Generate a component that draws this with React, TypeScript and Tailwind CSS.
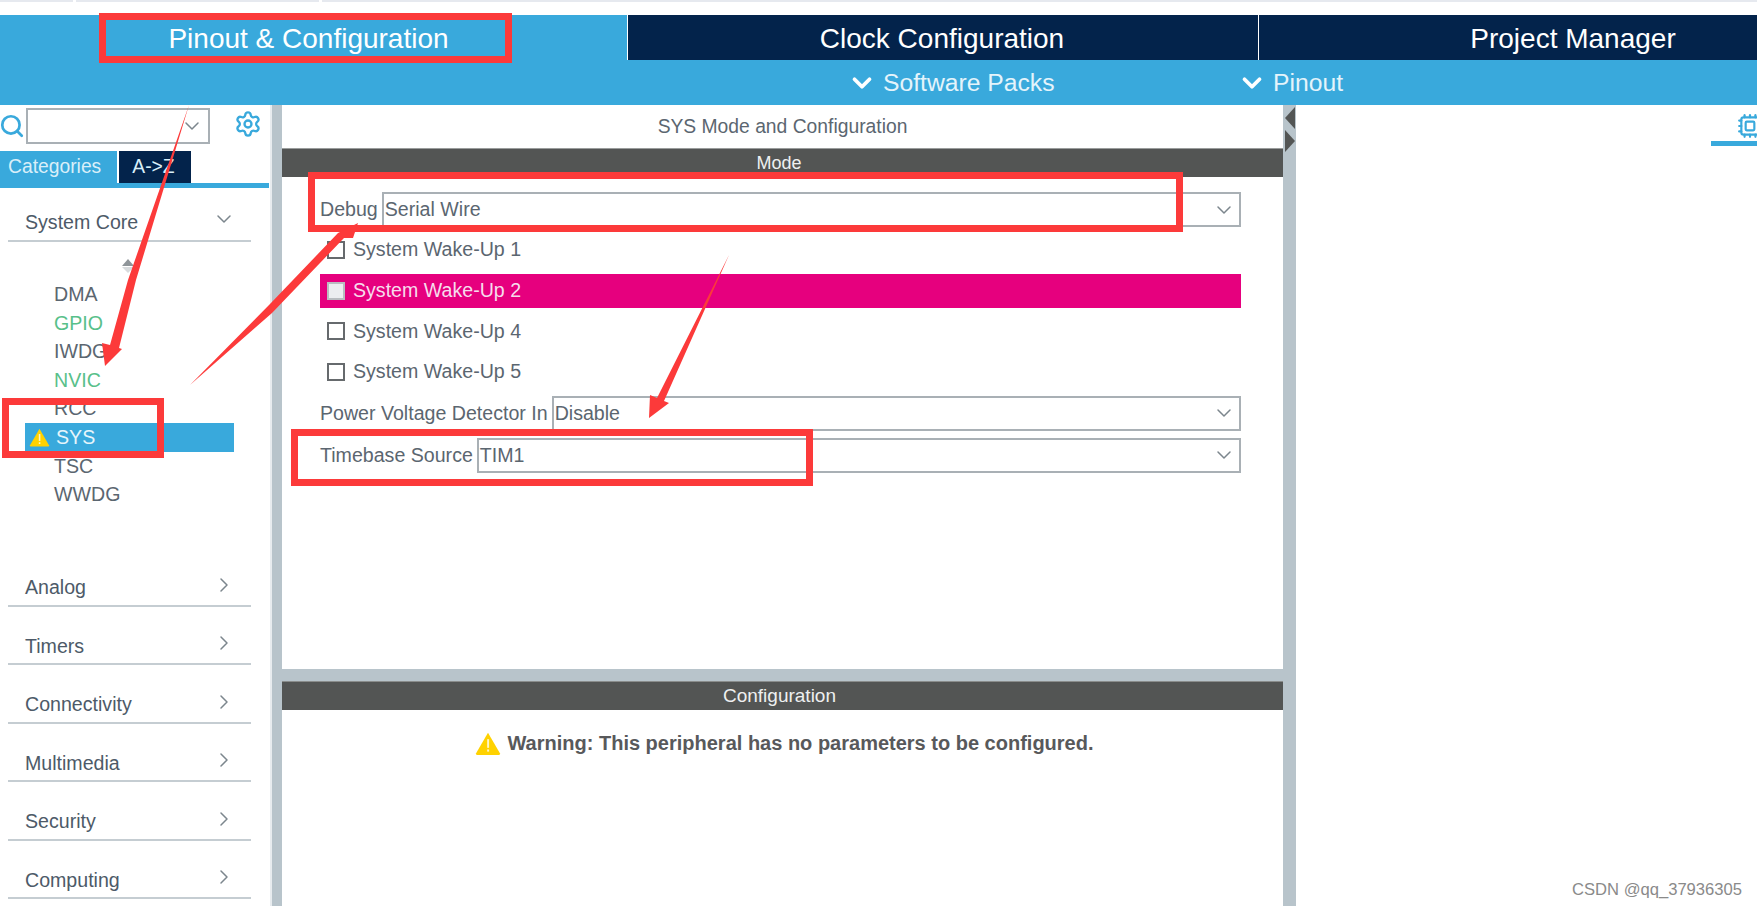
import { ChevronDown, ChevronRight, Cpu, Search, Settings } from "lucide-react";

function Warn({ className }: { className: string }) {
  return (
    <svg viewBox="0 0 24 22" className={className}>
      <path d="M12 1 L23 20 Q23.5 21.5 22 21.5 L2 21.5 Q.5 21.5 1 20 Z" fill="#ffd200" />
      <rect x="11.2" y="7" width="1.8" height="8" fill="#fff6c8" />
      <rect x="11.2" y="16.5" width="1.8" height="2" fill="#fff6c8" />
    </svg>
  );
}

function Category({ name }: { name: string }) {
  return (
    <div className="ml-2 flex h-[58.5px] w-[243px] shrink-0 items-end justify-between border-b-2 border-[#c5cdd2] pb-[2px] pl-[17px] pr-[15px] text-[19.6px] text-[#4d5a68]">
      <span>{name}</span>
      <ChevronRight className="mb-[6px] size-[24px] text-[#7c868d]" strokeWidth={1.5} />
    </div>
  );
}

function Wake({ label, active }: { label: string; active?: boolean }) {
  return (
    <div className={`flex h-[34px] items-center gap-[8px] pl-[7px] text-[19.6px] ${active ? "bg-[#e6007e] text-[#f6dcec]" : "text-[#5b6670]"}`}>
      <span className={`size-[18px] border-2 ${active ? "border-[#b9bdc0] bg-[#eceef0]" : "border-[#666a6d] bg-white"}`} />
      <span>{label}</span>
    </div>
  );
}

function Field({ label, value, top }: { label: string; value: string; top: string }) {
  return (
    <div className={`flex h-[35px] items-center gap-[4px] text-[19.6px] text-[#5b6670] ${top}`}>
      <span className="whitespace-nowrap">{label}</span>
      <div className="flex h-full flex-1 items-center justify-between border-2 border-[#a9b0b5] pl-[1px] pr-[3px]">
        <span>{value}</span>
        <ChevronDown className="size-[24px] text-[#7c868d]" strokeWidth={1.5} />
      </div>
    </div>
  );
}

const items: [string, string][] = [
  ["DMA", "text-[#5b6670]"],
  ["GPIO", "text-[#58c08a]"],
  ["IWDG", "text-[#5b6670]"],
  ["NVIC", "text-[#58c08a]"],
  ["RCC", "text-[#5b6670]"],
];

export default function App() {
  return (
    <div className="relative flex h-[906px] w-[1757px] flex-col overflow-hidden bg-white font-['Liberation_Sans',sans-serif]">
      <div className="flex h-[15px] shrink-0 items-start gap-[3px]">
        <div className="h-[2px] w-[73px] bg-[#e6e9ef]" />
        <div className="h-[2px] w-[243px] bg-[#e6e9ef]" />
        <div className="h-[2px] flex-1 bg-[#e6e9ef]" />
      </div>

      <div className="flex h-[45px] shrink-0 text-[28px] text-white">
        <div className="flex w-[627px] items-center justify-center bg-[#39a9dc] pr-[10px] pt-[2px]">Pinout &amp; Configuration</div>
        <div className="flex w-[631px] items-center justify-center border-l border-white bg-[#03234b] pr-[2px] pt-[2px]">Clock Configuration</div>
        <div className="flex flex-1 items-center justify-center border-l border-white bg-[#03234b] pl-[130px] pt-[2px]">Project Manager</div>
      </div>

      <div className="flex h-[45px] shrink-0 items-center bg-[#39a9dc] pl-[847px] text-[24.7px] text-[#e4f4fb]">
        <ChevronDown className="size-[30px] text-white" strokeWidth={3} />
        <span className="ml-[6px] w-[354px]">Software Packs</span>
        <ChevronDown className="size-[30px] text-white" strokeWidth={3} />
        <span className="ml-[6px]">Pinout</span>
      </div>

      <div className="flex flex-1">
        <aside className="flex w-[270px] shrink-0 flex-col bg-white">
          <div className="flex h-[46px] shrink-0 items-start pt-[3px]">
            <Search className="ml-[-1px] mt-[5px] size-[26px] text-[#39a9dc]" strokeWidth={2.5} />
            <div className="ml-[1px] flex h-[36px] w-[184px] items-center justify-end border-2 border-[#a9b0b5] pr-[4px]">
              <ChevronDown className="size-[24px] text-[#7c868d]" strokeWidth={1.5} />
            </div>
            <Settings className="ml-[24px] mt-[2px] size-[28px] text-[#39a9dc]" strokeWidth={2} />
          </div>
          <div className="mr-[1px] flex h-[37px] shrink-0 items-start gap-[2px] border-b-[5px] border-[#39a9dc] text-[19.3px] text-[#d9eff9]">
            <div className="flex h-[32px] w-[117px] items-center bg-[#39a9dc] pl-[8px] pt-[1px]">Categories</div>
            <div className="flex h-[32px] w-[72px] items-center justify-center bg-[#03234b] pr-[3px] pt-[1px]">A-&gt;Z</div>
          </div>

          <div className="ml-2 flex h-[54px] w-[243px] shrink-0 items-end justify-between border-b-2 border-[#c5cdd2] pb-[3px] pl-[17px] pr-[15px] text-[19.6px] text-[#4d5a68]">
            <span>System Core</span>
            <ChevronDown className="mb-[6px] size-[24px] text-[#7c868d]" strokeWidth={1.5} />
          </div>

          <div className="relative flex h-[306px] shrink-0 flex-col pt-[38px] text-[19.6px] leading-[28.5px]">
            <div className="absolute left-[122px] top-[17px] h-0 w-0 border-x-[6px] border-b-[7px] border-x-transparent border-b-[#8f9599]" />
            <div className="absolute left-[122px] top-[25px] h-0 w-0 border-x-[6px] border-t-[6px] border-x-transparent border-t-[#d8dbdd]" />
            {items.map(([n, c]) => (
              <div key={n} className={`pl-[54px] ${c}`}>{n}</div>
            ))}
            <div className="ml-[25px] flex h-[29px] w-[209px] items-center bg-[#39a9dc] pl-[4px] text-[#e6f5fb]">
              <Warn className="h-[19px] w-[21px]" />
              <span className="ml-[6px]">SYS</span>
            </div>
            <div className="pl-[54px] text-[#5b6670]">TSC</div>
            <div className="pl-[54px] text-[#5b6670]">WWDG</div>
          </div>

          {["Analog", "Timers", "Connectivity", "Multimedia", "Security", "Computing"].map((n) => (
            <Category key={n} name={n} />
          ))}
        </aside>

        <div className="w-[12px] shrink-0 border-l-2 border-[#e8ecef] bg-[#b8c4cb]" />

        <main className="flex w-[1001px] shrink-0 flex-col bg-[#b8c4cb]">
          <div className="flex h-[564px] shrink-0 flex-col bg-white">
            <div className="flex h-[43px] shrink-0 items-center justify-center pt-[2px] text-[19.3px] text-[#5b6670]">SYS Mode and Configuration</div>
            <div className="flex h-[29px] shrink-0 items-center justify-center border-t border-[#9a9d9c] bg-[#535554] pr-[7px] text-[18px] text-[#eef0f0]">Mode</div>
            <div className="flex flex-col pl-[38px] pr-[42px] pt-[15px]">
              <Field label="Debug" value="Serial Wire" top="" />
              <div className="mt-[6px] flex flex-col gap-[6.67px]">
                <Wake label="System Wake-Up 1" />
                <Wake label="System Wake-Up 2" active />
                <Wake label="System Wake-Up 4" />
                <Wake label="System Wake-Up 5" />
              </div>
              <Field label="Power Voltage Detector In" value="Disable" top="mt-[7px]" />
              <Field label="Timebase Source" value="TIM1" top="mt-[7px]" />
            </div>
          </div>
          <div className="mt-[12px] flex flex-1 flex-col bg-white">
            <div className="flex h-[29px] shrink-0 items-center justify-center border-t border-[#8a8d8c] bg-[#535554] pr-[6px] text-[19px] text-[#eef0f0]">Configuration</div>
            <div className="flex items-center justify-center gap-[6px] pl-[4px] pt-[18px] text-[20px] font-bold text-[#58595b]">
              <Warn className="h-[25px] w-[26px]" />
              <span>Warning: This peripheral has no parameters to be configured.</span>
            </div>
          </div>
        </main>

        <div className="relative w-[13px] shrink-0 bg-[#b8c4cb]">
          <div className="absolute left-[2px] top-[2px] h-0 w-0 border-y-[11px] border-r-[10px] border-y-transparent border-r-[#535554]" />
          <div className="absolute left-[2px] top-[25px] h-0 w-0 border-y-[11px] border-l-[10px] border-y-transparent border-l-[#535554]" />
        </div>

        <div className="flex flex-1 justify-end">
          <div className="h-[41px] w-[46px] overflow-hidden border-b-[5px] border-[#39a9dc] pl-[26px] pt-[8px]">
            <Cpu className="size-[26px] text-[#39a9dc]" strokeWidth={2} />
          </div>
        </div>
      </div>

      {/* annotations drawn over the screenshot */}
      <div className="absolute left-[99px] top-[13px] h-[50px] w-[413px] border-[7px] border-[#fc3a3a]" />
      <div className="absolute left-[2px] top-[398px] h-[60px] w-[162px] border-[7px] border-[#fc3a3a]" />
      <div className="absolute left-[308px] top-[172px] h-[60px] w-[875px] border-[7px] border-[#fc3a3a]" />
      <div className="absolute left-[291px] top-[429px] h-[57px] w-[522px] border-[7px] border-[#fc3a3a]" />
      <svg className="absolute left-0 top-0 h-[906px] w-[1757px]" viewBox="0 0 1757 906" fill="#fc3a3a">
        <polygon points="189,105 136,280 119,348 122,349 105,366 102,343 110,345 128,280" />
        <polygon points="190,385 270,304 338,233 358,223 353,238 344,238 272,313" />
        <polygon points="729,255 664,401 669,403 649,418 650,395 657,398" />
      </svg>
      <div className="absolute right-[15px] top-[878px] text-[16.6px] text-[#8a8a8a]">CSDN @qq_37936305</div>
    </div>
  );
}
